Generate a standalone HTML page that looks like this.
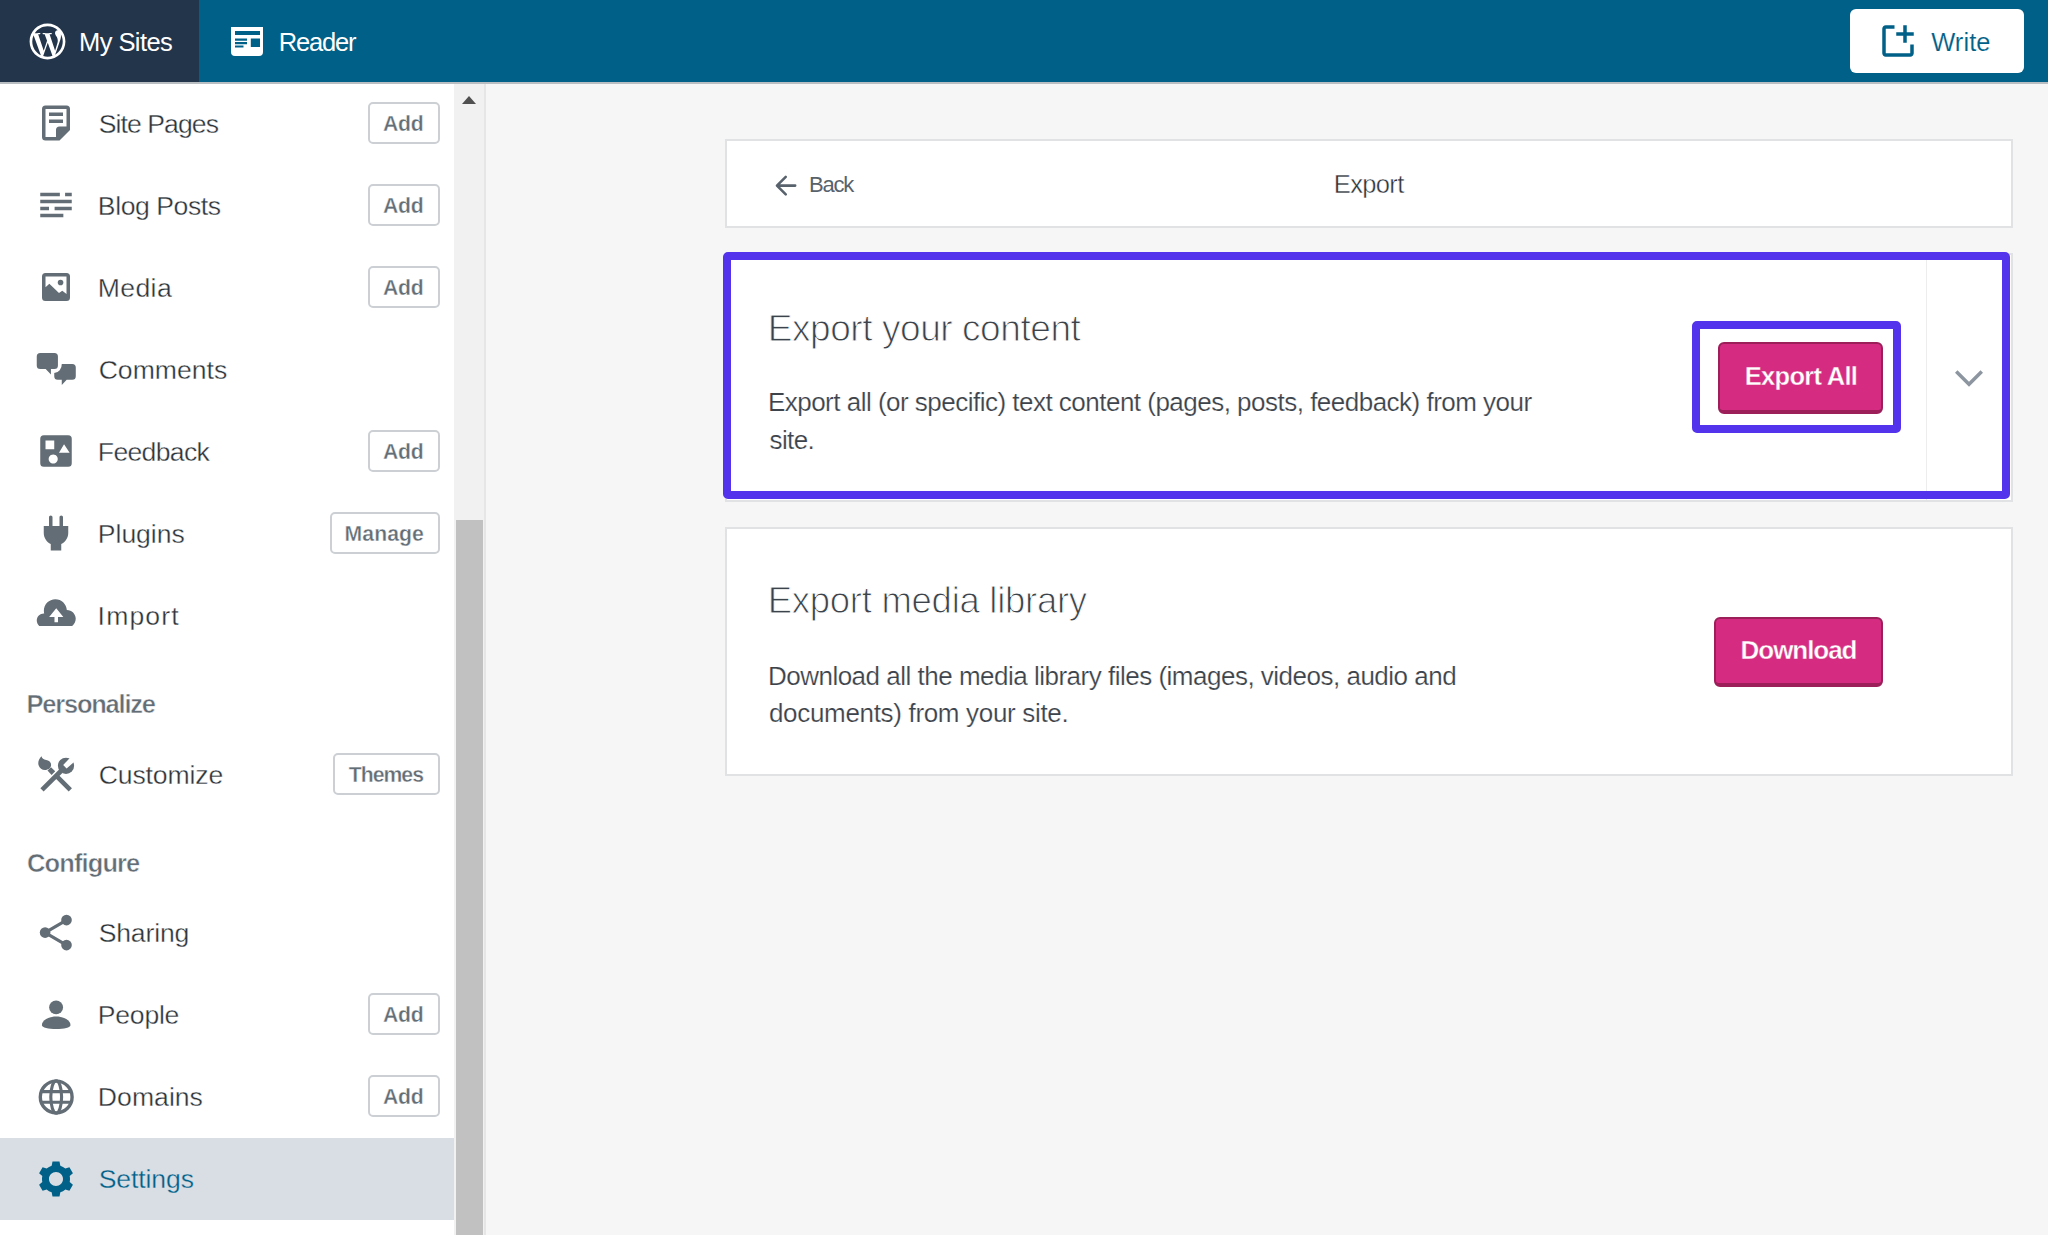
<!DOCTYPE html>
<html><head><meta charset="utf-8"><title>Export - Settings - WordPress.com</title>
<style>
html,body{margin:0;padding:0;width:2048px;height:1235px;overflow:hidden;background:#f6f6f6}
.abs{position:absolute;box-sizing:content-box}
.t{position:absolute;white-space:pre;font-family:"Liberation Sans", sans-serif}
.card{background:#fff;border:2px solid #e0e2e3}
.btn2{border:2px solid #ccd0d4;border-radius:5px;background:#fff}
.pbtn{background:#d52c82;border:2px solid #9c1f5a;border-bottom-width:4px;border-radius:6px}
</style></head><body>
<div class="abs" style="left:0;top:0;width:2048px;height:82px;background:#016087"></div>
<div class="abs" style="left:0;top:0;width:199px;height:82px;background:#23354b"></div>
<div class="abs" style="left:0;top:82px;width:2048px;height:2px;background:#b9bec2"></div>
<svg class="abs" style="left:25.5px;top:19.6px" width="43" height="43" viewBox="0 0 24 24" fill="#fff"><path d="M12 2C6.477 2 2 6.477 2 12s4.477 10 10 10 10-4.477 10-10S17.523 2 12 2zM3.5 12c0-1.232.264-2.402.736-3.46L8.29 19.65C5.456 18.272 3.5 15.365 3.5 12zm8.5 8.5c-.834 0-1.64-.12-2.4-.345l2.55-7.41 2.613 7.157c.017.042.038.08.06.117-.884.31-1.833.48-2.823.48zm1.172-12.485c.512-.027.973-.08.973-.08.458-.055.404-.728-.054-.702 0 0-1.376.108-2.265.108-.835 0-2.24-.107-2.24-.107-.458-.026-.51.674-.053.7 0 0 .434.055.892.082l1.324 3.63-1.86 5.578-3.096-9.208c.512-.027.973-.08.973-.08.458-.055.403-.728-.055-.702 0 0-1.376.108-2.265.108-.16 0-.347-.003-.547-.01C6.418 5.025 9.03 3.5 12 3.5c2.213 0 4.228.846 5.74 2.232-.037-.002-.072-.007-.11-.007-.835 0-1.427.727-1.427 1.51 0 .7.404 1.292.835 1.993.323.566.7 1.293.7 2.344 0 .727-.28 1.572-.646 2.748l-.848 2.833-3.072-9.138zm3.1 11.332l2.597-7.506c.484-1.212.645-2.18.645-3.044 0-.313-.02-.603-.057-.874.664 1.21 1.042 2.6 1.042 4.078 0 3.136-1.7 5.874-4.227 7.347z"/></svg>
<div class="t" style="left:78.96px;top:30.12px;font-size:25.5px;line-height:25.5px;color:#fff;font-weight:400;letter-spacing:-0.551px;">My Sites</div>
<svg class="abs" style="left:231px;top:26.6px" width="32" height="29" viewBox="0 0 32 29" fill="#fff"><path fill-rule="evenodd" d="M0 0H32V25a4 4 0 0 1-4 4H4a4 4 0 0 1-4-4Z M4 4V8H29V4Z M4 11.5V13.8H16V11.5Z M4 15V17.2H16V15Z M4 18.6V20.6H12.5V18.6Z M19.8 11.5V20H29V11.5Z"/></svg>
<div class="t" style="left:278.76px;top:30.12px;font-size:25.5px;line-height:25.5px;color:#fff;font-weight:400;letter-spacing:-1.198px;">Reader</div>
<div class="abs" style="left:1850px;top:9px;width:174px;height:64px;background:#fff;border-radius:6px"></div>
<svg class="abs" style="left:1876.75px;top:19.75px" width="42" height="42" viewBox="0 0 24 24" fill="#016087"><path d="M21 14v5c0 1.105-.895 2-2 2H5c-1.105 0-2-.895-2-2V5c0-1.105.895-2 2-2h5v2H5v14h14v-5h2zM21 7h-4V3h-2v4h-4v2h4v4h2V9h4V7z"/></svg>
<div class="t" style="left:1931.14px;top:30.12px;font-size:25.5px;line-height:25.5px;color:#016087;font-weight:400;letter-spacing:0.092px;-webkit-text-stroke:0.15px #fff;">Write</div>
<div class="abs" style="left:0;top:84px;width:454px;height:1151px;background:#fff"></div>
<div class="abs" style="left:454px;top:84px;width:30px;height:1151px;background:#f1f1f1"></div>
<div class="abs" style="left:484.3px;top:84px;width:1.5px;height:1151px;background:#e6e6e6"></div>
<div class="abs" style="left:456px;top:520px;width:26.8px;height:715px;background:#c1c1c1"></div>
<svg class="abs" style="left:462px;top:96px" width="14" height="8" viewBox="0 0 14 8" fill="#505050"><path d="M7 0L14 8H0Z"/></svg>
<div class="abs" style="left:0;top:1138px;width:454px;height:82px;background:#d9dee4"></div>
<div class="t" style="left:98.67px;top:111.39px;font-size:26.6px;line-height:26.6px;color:#2c3338;font-weight:400;letter-spacing:-0.928px;-webkit-text-stroke:0.35px #fff;">Site Pages</div>
<div class="abs btn2" style="left:367.5px;top:102px;width:68px;height:38px"></div>
<div class="t" style="left:382.96px;top:112.98px;font-size:21.2px;line-height:21.2px;color:#636d75;font-weight:700;letter-spacing:-0.260px;-webkit-text-stroke:0.35px #fff;">Add</div>
<div class="t" style="left:97.87px;top:193.39px;font-size:26.6px;line-height:26.6px;color:#2c3338;font-weight:400;letter-spacing:-0.440px;-webkit-text-stroke:0.35px #fff;">Blog Posts</div>
<div class="abs btn2" style="left:367.5px;top:184px;width:68px;height:38px"></div>
<div class="t" style="left:382.96px;top:194.98px;font-size:21.2px;line-height:21.2px;color:#636d75;font-weight:700;letter-spacing:-0.260px;-webkit-text-stroke:0.35px #fff;">Add</div>
<div class="t" style="left:97.87px;top:275.39px;font-size:26.6px;line-height:26.6px;color:#2c3338;font-weight:400;letter-spacing:0.344px;-webkit-text-stroke:0.35px #fff;">Media</div>
<div class="abs btn2" style="left:367.5px;top:266px;width:68px;height:38px"></div>
<div class="t" style="left:382.96px;top:276.98px;font-size:21.2px;line-height:21.2px;color:#636d75;font-weight:700;letter-spacing:-0.260px;-webkit-text-stroke:0.35px #fff;">Add</div>
<div class="t" style="left:98.67px;top:357.39px;font-size:26.6px;line-height:26.6px;color:#2c3338;font-weight:400;letter-spacing:0.007px;-webkit-text-stroke:0.35px #fff;">Comments</div>
<div class="t" style="left:97.87px;top:439.39px;font-size:26.6px;line-height:26.6px;color:#2c3338;font-weight:400;letter-spacing:-0.692px;-webkit-text-stroke:0.35px #fff;">Feedback</div>
<div class="abs btn2" style="left:367.5px;top:430px;width:68px;height:38px"></div>
<div class="t" style="left:382.96px;top:440.98px;font-size:21.2px;line-height:21.2px;color:#636d75;font-weight:700;letter-spacing:-0.260px;-webkit-text-stroke:0.35px #fff;">Add</div>
<div class="t" style="left:97.87px;top:521.39px;font-size:26.6px;line-height:26.6px;color:#2c3338;font-weight:400;letter-spacing:-0.059px;-webkit-text-stroke:0.35px #fff;">Plugins</div>
<div class="abs btn2" style="left:329.5px;top:512px;width:106px;height:38px"></div>
<div class="t" style="left:344.52px;top:522.98px;font-size:21.2px;line-height:21.2px;color:#636d75;font-weight:700;letter-spacing:0.091px;-webkit-text-stroke:0.35px #fff;">Manage</div>
<div class="t" style="left:97.61px;top:603.39px;font-size:26.6px;line-height:26.6px;color:#2c3338;font-weight:400;letter-spacing:1.143px;-webkit-text-stroke:0.35px #fff;">Import</div>
<div class="t" style="left:98.67px;top:762.39px;font-size:26.6px;line-height:26.6px;color:#2c3338;font-weight:400;letter-spacing:-0.120px;-webkit-text-stroke:0.35px #fff;">Customize</div>
<div class="abs btn2" style="left:333px;top:753px;width:102.5px;height:38px"></div>
<div class="t" style="left:348.69px;top:763.98px;font-size:21.2px;line-height:21.2px;color:#636d75;font-weight:700;letter-spacing:-0.955px;-webkit-text-stroke:0.35px #fff;">Themes</div>
<div class="t" style="left:98.67px;top:920.39px;font-size:26.6px;line-height:26.6px;color:#2c3338;font-weight:400;letter-spacing:-0.163px;-webkit-text-stroke:0.35px #fff;">Sharing</div>
<div class="t" style="left:97.87px;top:1002.39px;font-size:26.6px;line-height:26.6px;color:#2c3338;font-weight:400;letter-spacing:-0.267px;-webkit-text-stroke:0.35px #fff;">People</div>
<div class="abs btn2" style="left:367.5px;top:993px;width:68px;height:38px"></div>
<div class="t" style="left:382.96px;top:1003.98px;font-size:21.2px;line-height:21.2px;color:#636d75;font-weight:700;letter-spacing:-0.260px;-webkit-text-stroke:0.35px #fff;">Add</div>
<div class="t" style="left:97.87px;top:1084.39px;font-size:26.6px;line-height:26.6px;color:#2c3338;font-weight:400;letter-spacing:0.020px;-webkit-text-stroke:0.35px #fff;">Domains</div>
<div class="abs btn2" style="left:367.5px;top:1075px;width:68px;height:38px"></div>
<div class="t" style="left:382.96px;top:1085.98px;font-size:21.2px;line-height:21.2px;color:#636d75;font-weight:700;letter-spacing:-0.260px;-webkit-text-stroke:0.35px #fff;">Add</div>
<div class="t" style="left:98.67px;top:1166.39px;font-size:26.6px;line-height:26.6px;color:#016087;font-weight:400;letter-spacing:-0.100px;-webkit-text-stroke:0.35px #d9dee4;">Settings</div>
<div class="t" style="left:26.52px;top:692.33px;font-size:25.5px;line-height:25.5px;color:#636d75;font-weight:700;letter-spacing:-1.227px;-webkit-text-stroke:0.5px #fff;">Personalize</div>
<div class="t" style="left:26.98px;top:850.83px;font-size:25.5px;line-height:25.5px;color:#636d75;font-weight:700;letter-spacing:-0.884px;-webkit-text-stroke:0.5px #fff;">Configure</div>
<svg class="abs" style="left:35px;top:101.5px" width="42" height="42" viewBox="0 0 24 24" fill="#636d75"><path fill-rule="evenodd" d="M6 2h12a2 2 0 0 1 2 2v12l-6 6H6a2 2 0 0 1-2-2V4a2 2 0 0 1 2-2zM6 4v16h6v-4a2 2 0 0 1 2-2h4V4z"/><path d="M8 6h8v2H8zM8 10h8v2H8z"/></svg>
<svg class="abs" style="left:34.75px;top:183.75px" width="42" height="42" viewBox="0 0 24 24" fill="#636d75"><path d="M3 5h11.2v2H3zM17.2 5H21v2h-3.8zM3 9h18v2H3zM3 13h5v2H3zM11.2 13H21v2h-9.8zM3 17h13.2v2H3z"/></svg>
<svg class="abs" style="left:35px;top:266px" width="42" height="42" viewBox="0 0 24 24" fill="#636d75"><path fill-rule="evenodd" d="M6 4h12a2 2 0 0 1 2 2v12a2 2 0 0 1-2 2H6a2 2 0 0 1-2-2V6a2 2 0 0 1 2-2zM6 6v6.1L8.2 10.2L13.7 15.4L15.6 14.2L18 16V6z"/><circle cx="14.6" cy="9.4" r="1.6"/></svg>
<svg class="abs" style="left:35px;top:349px" width="42" height="42" viewBox="0 0 24 24" fill="#636d75"><path d="M3 2.3h8.1a2 2 0 0 1 2 2v5.1a2 2 0 0 1-2 2H9.1V14.6L6.1 11.4H3a2 2 0 0 1-2-2V4.3a2 2 0 0 1 2-2z"/><path d="M15.3 8.6H21.3a2 2 0 0 1 2 2V15.6a2 2 0 0 1-2 2H18.1L15.3 20.5V17.6H13a2 2 0 0 1-2-2V13.7A4.6 4.9 0 0 0 15.3 8.6z"/></svg>
<svg class="abs" style="left:35px;top:430px" width="42" height="42" viewBox="0 0 24 24" fill="#636d75"><path fill-rule="evenodd" d="M5 3h14a2 2 0 0 1 2 2v14a2 2 0 0 1-2 2H5a2 2 0 0 1-2-2V5a2 2 0 0 1 2-2zM6 6v5h5V6zM16.6 8.2L13.7 13H19.8zM10.4 14a2.6 2.6 0 1 0 0.001 0z"/></svg>
<svg class="abs" style="left:35px;top:512px" width="42" height="42" viewBox="0 0 24 24" fill="#636d75"><path d="M16 8V3c0-.552-.448-1-1-1s-1 .448-1 1v5h-4V3c0-.552-.448-1-1-1s-1 .448-1 1v5H5v4c0 2.79 1.637 5.193 4 6.317V22h6v-3.683c2.363-1.124 4-3.527 4-6.317V8h-3z"/></svg>
<svg class="abs" style="left:34.9px;top:593.75px" width="42.5" height="42.5" viewBox="0 0 24 24" fill="#636d75"><path d="M18 9c-.01 0-.017.002-.025.003C17.72 5.646 14.922 3 11.5 3 7.91 3 5 5.91 5 9.5c0 .524.07 1.03.186 1.52C5.123 11.015 5.064 11 5 11c-2.21 0-4 1.79-4 4 0 1.202.54 2.267 1.38 3h18.593C22.196 17.09 23 15.643 23 14c0-2.76-2.24-5-5-5zm-5 4v3h-2v-3H8l4-5 4 5h-3z"/></svg>
<svg class="abs" style="left:30px;top:748px" width="50" height="50" viewBox="0 0 50 50" fill="#636d75"><path d="M10.37 40.27L13.63 43.53L32.63 24.63L29.37 21.37Z"/><path d="M27.93 26.17L24.67 29.43L38.67 43.43L41.93 40.17Z"/><path d="M21.6 26.9L25.2 23.3L21 19.2L17.5 22.6Z"/><path d="M11.5 8.3C9 11 7.6 14 8.6 17.3C9.6 20.8 12.8 22.4 15.8 22C18.9 21.6 21.2 19.6 21.1 16.9C21 14.1 19 12.2 16.2 11.9C13.6 11.6 12 10.6 11.5 8.3Z"/><circle cx="36" cy="17.8" r="8.1"/><path d="M33.2 17L44.8 4.8L49.2 9.6L36.6 20.4Z" fill="#fff"/></svg>
<svg class="abs" style="left:35px;top:913px" width="42" height="42" viewBox="0 0 42 42" fill="#636d75"><circle cx="31.5" cy="7.1" r="5.3"/><circle cx="10.1" cy="19.6" r="5.3"/><circle cx="31.5" cy="32.1" r="5.3"/><path d="M10.1 19.6L31.5 7.1M10.1 19.6L31.5 32.1" stroke="#636d75" stroke-width="3.2" fill="none"/></svg>
<svg class="abs" style="left:31px;top:991px" width="50" height="50" viewBox="0 0 50 50" fill="#636d75"><circle cx="25.1" cy="16.4" r="6.95"/><path d="M10.9 34.2C10.9 29 17.5 25.5 25.2 25.5C32.9 25.5 39.5 29 39.5 34.2C39.5 36.6 33 38 25.2 38C17.4 38 10.9 36.6 10.9 34.2Z"/></svg>
<svg class="abs" style="left:35px;top:1075.5px" width="42" height="42" viewBox="0 0 42 42" fill="#636d75"><circle cx="21.2" cy="21" r="15.9" fill="none" stroke="#636d75" stroke-width="3.4"/><path d="M5 14.1H37v3.2H5zM5 24.65H37v3.2H5z"/><ellipse cx="21.2" cy="21" rx="5.4" ry="16.2" fill="none" stroke="#636d75" stroke-width="3.1"/></svg>
<svg class="abs" style="left:35px;top:1157.8px" width="42" height="42" viewBox="0 0 24 24" fill="#016087"><path d="M20 12c0-.568-.06-1.122-.174-1.656l1.834-1.612-2-3.464-2.322.786c-.82-.736-1.787-1.308-2.86-1.657L14 2h-4l-.48 2.396c-1.07.35-2.04.92-2.858 1.657L4.34 5.268l-2 3.464 1.834 1.612C4.06 10.878 4 11.432 4 12s.06 1.122.174 1.656L2.34 15.268l2 3.464 2.322-.786c.82.736 1.787 1.308 2.86 1.657L10 22h4l.48-2.396c1.07-.35 2.04-.92 2.858-1.657l2.322.786 2-3.464-1.834-1.612c.113-.534.174-1.088.174-1.656zm-8 4c-2.21 0-4-1.79-4-4s1.79-4 4-4 4 1.79 4 4-1.79 4-4 4z"/></svg>
<div class="abs" style="left:486px;top:84px;width:1562px;height:1151px;background:#f6f6f6"></div>
<div class="abs card" style="left:725px;top:139px;width:1284px;height:85px"></div>
<svg class="abs" style="left:770px;top:169.5px" width="31.5" height="31.5" viewBox="0 0 24 24" fill="none"><path d="M19.2 11.9H5.6M12 5.2L5.3 11.9L12 18.6" fill="none" stroke="#58626c" stroke-width="1.95" stroke-linecap="round" stroke-linejoin="round"/></svg>
<div class="t" style="left:809.04px;top:173.80px;font-size:22px;line-height:22px;color:#58626c;font-weight:400;letter-spacing:-1.193px;">Back</div>
<div class="t" style="left:1333.86px;top:171.72px;font-size:25.5px;line-height:25.5px;color:#2c3338;font-weight:400;letter-spacing:-0.660px;-webkit-text-stroke:0.4px #fff;">Export</div>
<div class="abs card" style="left:725px;top:253px;width:1284px;height:245px"></div>
<div class="abs" style="left:1926px;top:255px;width:1px;height:245px;background:#ededed"></div>
<div class="t" style="left:767.74px;top:310.05px;font-size:37px;line-height:37px;color:#3c434a;font-weight:400;letter-spacing:-0.431px;-webkit-text-stroke:0.95px #fff;">Export your content</div>
<div class="t" style="left:767.92px;top:388.90px;font-size:26px;line-height:26px;color:#3c434a;font-weight:400;letter-spacing:-0.512px;-webkit-text-stroke:0.2px #fff;">Export all (or specific) text content (pages, posts, feedback) from your</div>
<div class="t" style="left:769.62px;top:426.60px;font-size:26px;line-height:26px;color:#3c434a;font-weight:400;letter-spacing:-0.640px;-webkit-text-stroke:0.2px #fff;">site.</div>
<div class="abs pbtn" style="left:1718px;top:342px;width:161px;height:66px"></div>
<div class="t" style="left:1744.71px;top:363.82px;font-size:25.5px;line-height:25.5px;color:#fff;font-weight:700;letter-spacing:-0.697px;-webkit-text-stroke:0.35px #d52c82;">Export All</div>
<svg class="abs" style="left:1948.3px;top:356.8px" width="42" height="42" viewBox="0 0 24 24" fill="#8d96a0"><path d="M20 9l-8 8-8-8 1.414-1.414L12 14.172l6.586-6.586z"/></svg>
<div class="abs" style="left:723px;top:252px;width:1271px;height:231px;border:8px solid #5333eb;border-radius:5px"></div>
<div class="abs" style="left:1692px;top:321px;width:193px;height:96px;border:8px solid #5333eb;border-radius:5px"></div>
<div class="abs card" style="left:725px;top:527px;width:1284px;height:245px"></div>
<div class="t" style="left:767.78px;top:583.18px;font-size:36.5px;line-height:36.5px;color:#3c434a;font-weight:400;letter-spacing:-0.277px;-webkit-text-stroke:0.95px #fff;">Export media library</div>
<div class="t" style="left:767.92px;top:662.90px;font-size:26px;line-height:26px;color:#3c434a;font-weight:400;letter-spacing:-0.499px;-webkit-text-stroke:0.2px #fff;">Download all the media library files (images, videos, audio and</div>
<div class="t" style="left:768.96px;top:699.90px;font-size:26px;line-height:26px;color:#3c434a;font-weight:400;letter-spacing:-0.322px;-webkit-text-stroke:0.2px #fff;">documents) from your site.</div>
<div class="abs pbtn" style="left:1714px;top:617px;width:165px;height:64px"></div>
<div class="t" style="left:1740.58px;top:637.30px;font-size:26px;line-height:26px;color:#fff;font-weight:700;letter-spacing:-1.049px;-webkit-text-stroke:0.35px #d52c82;">Download</div>
</body></html>
